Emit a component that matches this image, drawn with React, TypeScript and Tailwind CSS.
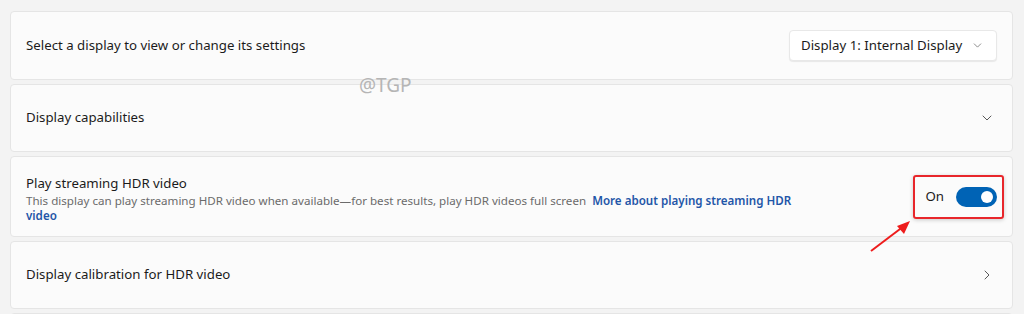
import { ChevronDown, ChevronRight } from "lucide-react";

const font = { fontFamily: '"Noto Sans", "Open Sans", sans-serif' };

function Card({ className = "", children }: { className?: string; children: React.ReactNode }) {
  return (
    <div
      className={`flex items-center justify-between rounded-[4px] border border-[#e5e5e5] bg-[#fbfbfb] pl-[15px] pr-[17px] ${className}`}
    >
      {children}
    </div>
  );
}

export default function App() {
  return (
    <div className="relative h-[314px] w-[1024px] overflow-hidden bg-[#f3f3f3] text-[#1b1b1b]" style={font}>
      <div className="flex flex-col gap-[4px] pl-[10px] pr-[11px] pt-[11px]">
        <Card className="h-[69px]">
          <span className="text-[13.25px]">Select a display to view or change its settings</span>
          <button className="-mr-[2px] flex h-[31px] w-[208px] items-center justify-between whitespace-nowrap rounded-[4px] border border-[#e8e8e8] bg-white pl-[11px] pr-[12px] text-[13.25px] text-[#1b1b1b] shadow-[0_1px_1px_rgba(0,0,0,0.08)]">
            <span>Display 1: Internal Display</span>
            <ChevronDown size={13} strokeWidth={1.3} className="text-[#5f5f5f]" />
          </button>
        </Card>
        <Card className="h-[68px]">
          <span className="text-[13.25px]">Display capabilities</span>
          <ChevronDown size={16} strokeWidth={1.3} className="text-[#3f3f3f]" />
        </Card>
        <Card className="h-[81px]">
          <div className="w-[775px] pt-[3px] leading-[15px]">
            <div className="text-[13.25px] leading-[19px]">Play streaming HDR video</div>
            <p className="text-[11.6px] text-[#6b6b6b]">
              This display can play streaming HDR video when available—for best results, play HDR videos full screen{" "}
              <a className="pl-[3px] font-semibold text-[#1f56a8]">More about playing streaming HDR video</a>
            </p>
          </div>
          <div className="relative -mr-[9px] flex items-center gap-[12px] rounded-[3px] border-2 border-[#e8262b] py-[10px] pl-[10px] pr-[5px] shadow-[0_1px_4px_rgba(0,0,0,0.2)]">
            <span className="text-[13.25px]">On</span>
            <div className="flex h-[20px] w-[41px] items-center justify-end rounded-full bg-[#0063b5] pr-[4px]">
              <div className="h-[12px] w-[12px] rounded-full bg-white" />
            </div>
          </div>
        </Card>
        <Card className="h-[68px]">
          <span className="text-[13.25px]">Display calibration for HDR video</span>
          <ChevronRight size={16} strokeWidth={1.3} className="text-[#3f3f3f]" />
        </Card>
        <Card className="h-[40px]">
          <span />
        </Card>
      </div>
      <div className="absolute left-[359px] top-[71px] text-[19px] text-[#b5b5b5]">@TGP</div>
      <svg className="absolute left-[866px] top-[214px]" width="50" height="42" viewBox="0 0 50 42">
        <line x1="5" y1="37" x2="38" y2="12" stroke="#ee1c1c" strokeWidth="2" />
        <polygon points="44,7 31,12 38,20" fill="#ee1c1c" />
      </svg>
    </div>
  );
}
